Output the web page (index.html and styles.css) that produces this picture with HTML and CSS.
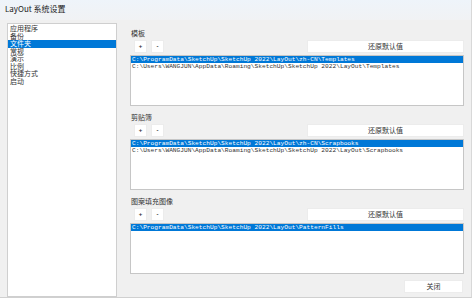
FILE: index.html
```html
<!DOCTYPE html>
<html lang="zh-CN">
<head>
<meta charset="utf-8">
<title>LayOut 系统设置</title>
<link rel="stylesheet" href="styles.css">
</head>
<body>
<div class="window">
  <div class="titlebar">LayOut 系统设置</div>
  <div class="content">
    <ul class="nav">
      <li>应用程序</li>
      <li>备份</li>
      <li class="sel">文件夹</li>
      <li>常规</li>
      <li>演示</li>
      <li>比例</li>
      <li>快捷方式</li>
      <li>启动</li>
    </ul>
    <div class="main">
      <section class="group">
        <div class="label">模板</div>
        <div class="tools">
          <button class="btn small">+</button>
          <button class="btn small">-</button>
          <button class="btn restore">还原默认值</button>
        </div>
        <ul class="paths">
          <li class="sel">C:\ProgramData\SketchUp\SketchUp 2022\LayOut\zh-CN\Templates</li>
          <li>C:\Users\WANGJUN\AppData\Roaming\SketchUp\SketchUp 2022\LayOut\Templates</li>
        </ul>
      </section>
      <section class="group">
        <div class="label">剪贴簿</div>
        <div class="tools">
          <button class="btn small">+</button>
          <button class="btn small">-</button>
          <button class="btn restore">还原默认值</button>
        </div>
        <ul class="paths">
          <li class="sel">C:\ProgramData\SketchUp\SketchUp 2022\LayOut\zh-CN\Scrapbooks</li>
          <li>C:\Users\WANGJUN\AppData\Roaming\SketchUp\SketchUp 2022\LayOut\Scrapbooks</li>
        </ul>
      </section>
      <section class="group">
        <div class="label">图案填充图像</div>
        <div class="tools">
          <button class="btn small">+</button>
          <button class="btn small">-</button>
          <button class="btn restore">还原默认值</button>
        </div>
        <ul class="paths">
          <li class="sel">C:\ProgramData\SketchUp\SketchUp 2022\LayOut\PatternFills</li>
        </ul>
      </section>
      <div class="footer">
        <button class="btn close">关闭</button>
      </div>
    </div>
  </div>
</div>
</body>
</html>
```
FILE: styles.css
```css
html, body {
  margin: 0;
  padding: 0;
  background: #ffffff;
}
body {
  font-family: "Noto Sans CJK SC", "Noto Sans", sans-serif;
  color: #222;
}
.window {
  width: 471px;
  height: 297px;
  background: #f0f0f0;
  border-right: 1px solid #d8d8d8;
  border-bottom: 1px solid #d0d0d0;
  overflow: hidden;
}
.titlebar {
  height: 20px;
  line-height: 18px;
  padding-left: 5px;
  font-size: 8px;
  color: #1a1a1a;
  background: linear-gradient(#eef4fa, #f1f2f4);
}
.content {
  display: flex;
  gap: 13px;
  padding-left: 7px;
}
.nav {
  list-style: none;
  margin: 3px 0 0 0;
  padding: 1px 0 0 0;
  width: 108px;
  height: 271px;
  background: #fff;
  border: 1px solid #cfcfcf;
  font-family: "Noto Sans CJK SC", serif;
  font-size: 7px;
  color: #333;
}
.nav li {
  height: 7.5px;
  line-height: 7.5px;
  padding-left: 2px;
}
.nav li.sel {
  background: #0078d7;
  color: #fff;
}
.main {
  width: 334px;
  padding-top: 8px;
}
.group {
  margin-bottom: 6px;
}
.label {
  height: 10px;
  line-height: 10px;
  margin-bottom: 2px;
  font-size: 7px;
  color: #333;
  padding-left: 1px;
}
.tools {
  display: flex;
  height: 13px;
  margin-bottom: 2px;
}
.btn {
  background: #fff;
  border: 1px solid #ececec;
  padding: 0;
  margin: 0;
  font-family: "Noto Sans CJK SC", serif;
  font-size: 7px;
  color: #333;
  height: 13px;
  line-height: 11px;
}
.btn.small {
  width: 13px;
  font-family: "Liberation Sans", sans-serif;
  font-size: 6px;
  font-weight: bold;
}
.tools .small:first-child {
  margin-left: 4px;
}
.tools .small + .small {
  margin-left: 4px;
}
.btn.restore {
  width: 157px;
  margin-left: auto;
}
.paths {
  list-style: none;
  margin: 0;
  padding: 0;
  height: 49px;
  background: #fff;
  border: 1px solid #c6c6c6;
  font-family: "Liberation Mono", monospace;
  font-size: 6.2px;
  color: #333;
}
.paths li {
  height: 7px;
  line-height: 7px;
  padding-left: 1px;
  white-space: nowrap;
}
.paths li.sel {
  background: #0078d7;
  color: #fff;
}
.footer {
  display: flex;
  justify-content: flex-end;
  margin-top: 2px;
}
.btn.close {
  width: 59px;
  margin-right: 1px;
}
```
